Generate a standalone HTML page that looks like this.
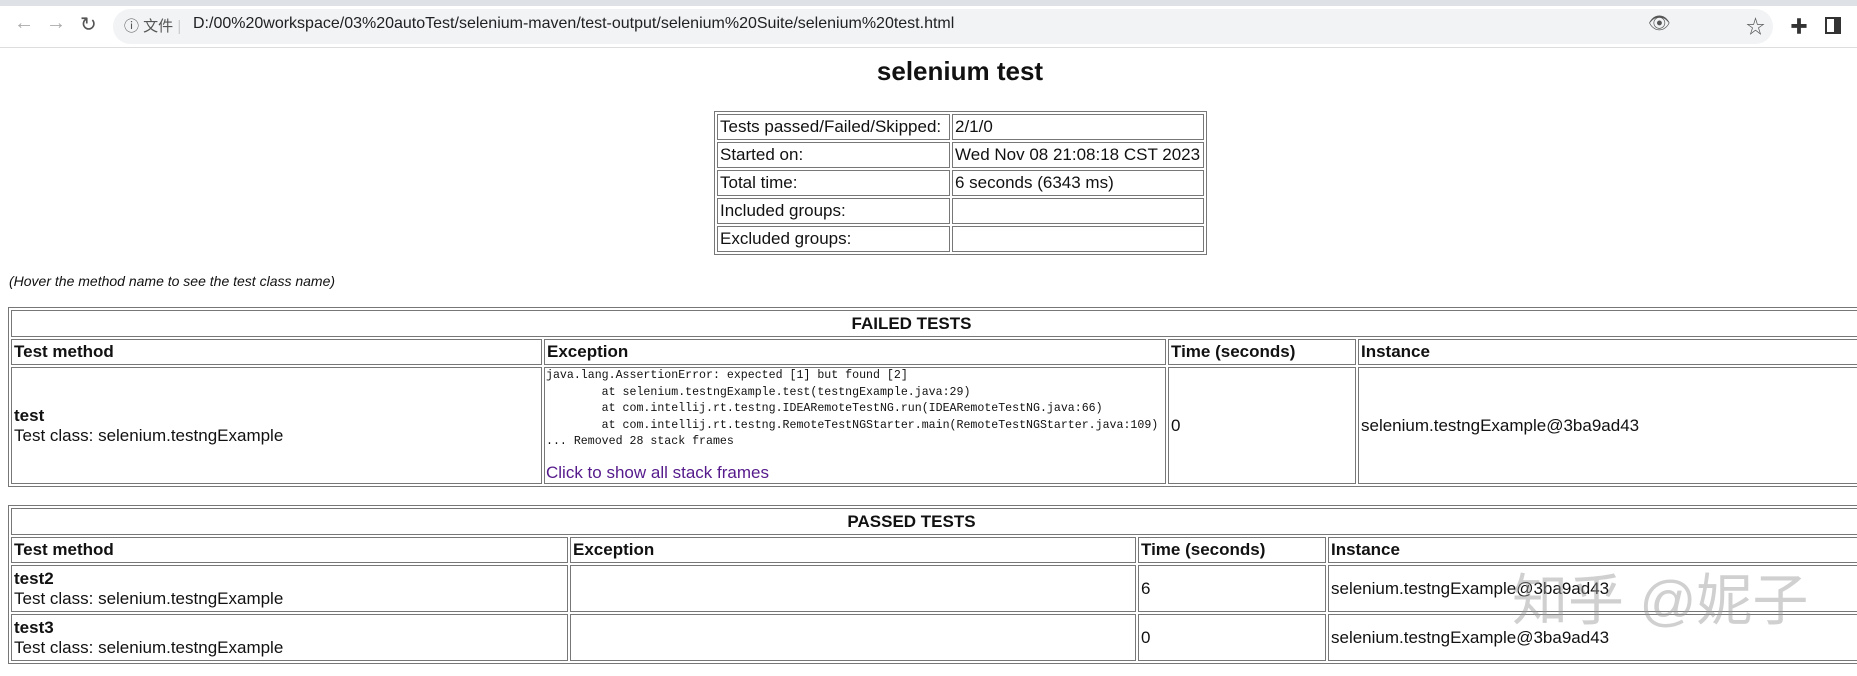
<!DOCTYPE html>
<html><head><meta charset="utf-8"><style>
body{margin:0;width:1857px;height:676px;overflow:hidden;background:#fff;font-family:"Liberation Sans","Noto Sans CJK SC",sans-serif;color:#111;position:relative}
.bar{position:absolute;left:0;top:0;width:1857px;height:47px;background:#fff;border-bottom:1px solid #ddd}
.tabs{position:absolute;left:0;top:0;width:1857px;height:6px;background:#dee1e6}
.pill{position:absolute;left:113px;top:9px;width:1660px;height:35px;border-radius:18px;background:#f1f3f4}
.url{position:absolute;left:193px;top:15px;font-size:16px;color:#202124;white-space:nowrap}
.nav{position:absolute;top:12px;font-size:20px;color:#aaa}
table{position:absolute;border-collapse:separate;border-spacing:2px;border:1px solid #777;table-layout:fixed;font-size:17px}
td,th{border:1px solid #777;padding:0 2px;text-align:left;vertical-align:middle;overflow:hidden;white-space:nowrap}
th{font-weight:bold}
pre{margin:0;font-family:"Liberation Mono",monospace;font-size:11.6px;line-height:16.5px}
a{color:#551a8b}
</style></head><body>
<div class="bar"><div class="tabs"></div><div class="pill"></div>
<span class="nav" style="left:14px">←</span><span class="nav" style="left:46px">→</span><span class="nav" style="left:80px;color:#555">↻</span>
<span style="position:absolute;left:124px;top:15px;font-size:15px;color:#555">ⓘ 文件 <span style="color:#ccc">|</span></span>
<div class="url">D:/00%20workspace/03%20autoTest/selenium-maven/test-output/selenium%20Suite/selenium%20test.html</div>
<span style="position:absolute;left:1648px;top:13px;font-size:18px;color:#555">👁</span>
<span style="position:absolute;left:1746px;top:12px;font-size:19px;color:#555">☆</span>
<span style="position:absolute;left:1790px;top:13px;font-size:18px;color:#333">✚</span>
<div style="position:absolute;left:1825px;top:17px;width:12px;height:13px;border:2px solid #333;background:linear-gradient(90deg,#fff 60%,#333 60%)"></div>
</div>
<div style="position:absolute;left:0;width:1920px;top:56px;text-align:center;font-weight:bold;font-size:26px">selenium test</div>
<table style="left:714px;top:111px;width:493px">
<colgroup><col style="width:233px"><col></colgroup>
<tr style="height:26px"><td>Tests passed/Failed/Skipped:</td><td>2/1/0</td></tr>
<tr style="height:26px"><td>Started on:</td><td>Wed Nov 08 21:08:18 CST 2023</td></tr>
<tr style="height:26px"><td>Total time:</td><td>6 seconds (6343 ms)</td></tr>
<tr style="height:26px"><td>Included groups:</td><td></td></tr>
<tr style="height:26px"><td>Excluded groups:</td><td></td></tr>
</table>
<div style="position:absolute;left:9px;top:273px;font-size:14px;font-style:italic">(Hover the method name to see the test class name)</div>
<table style="left:8px;top:307px;width:1900px">
<colgroup><col style="width:531px"><col style="width:622px"><col style="width:188px"><col></colgroup>
<tr style="height:27px"><th colspan="4" style="text-align:center;padding-right:95px">FAILED TESTS</th></tr>
<tr style="height:26px"><th>Test method</th><th>Exception</th><th>Time (seconds)</th><th>Instance</th></tr>
<tr style="height:117px"><td><b>test</b><br>Test class: selenium.testngExample</td><td style="padding:0 1px"><pre>java.lang.AssertionError: expected [1] but found [2]
        at selenium.testngExample.test(testngExample.java:29)
        at com.intellij.rt.testng.IDEARemoteTestNG.run(IDEARemoteTestNG.java:66)
        at com.intellij.rt.testng.RemoteTestNGStarter.main(RemoteTestNGStarter.java:109)
... Removed 28 stack frames</pre><div style="margin-top:12px;font-size:17px"><a>Click to show all stack frames</a></div></td><td>0</td><td>selenium.testngExample@3ba9ad43</td></tr>
</table>
<table style="left:8px;top:505px;width:1900px">
<colgroup><col style="width:557px"><col style="width:566px"><col style="width:188px"><col></colgroup>
<tr style="height:27px"><th colspan="4" style="text-align:center;padding-right:95px">PASSED TESTS</th></tr>
<tr style="height:26px"><th>Test method</th><th>Exception</th><th>Time (seconds)</th><th>Instance</th></tr>
<tr style="height:47px"><td><b>test2</b><br>Test class: selenium.testngExample</td><td></td><td>6</td><td>selenium.testngExample@3ba9ad43</td></tr>
<tr style="height:47px"><td><b>test3</b><br>Test class: selenium.testngExample</td><td></td><td>0</td><td>selenium.testngExample@3ba9ad43</td></tr>
</table>
<div style="position:absolute;left:1512px;top:556px;font-size:56px;color:rgba(150,150,150,0.45);white-space:nowrap">知乎 @妮子</div>
</body></html>
